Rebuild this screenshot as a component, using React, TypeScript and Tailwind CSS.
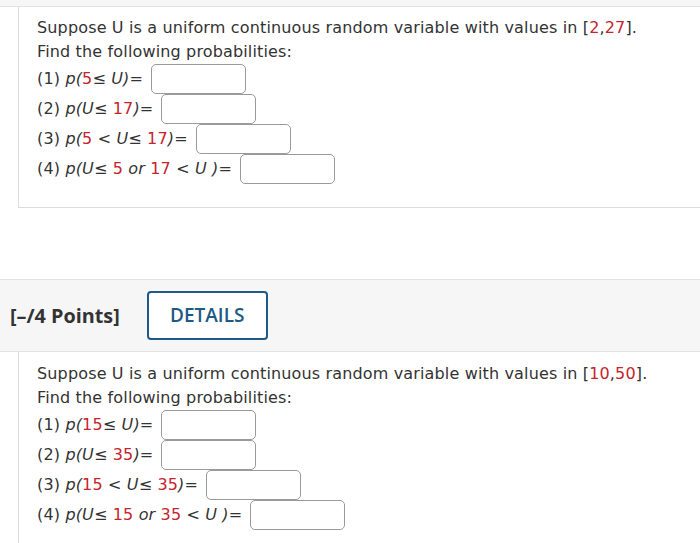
import React from "react";

const RED = "text-[#c5242c]";

function Box() {
  return (
    <span className="inline-block w-[95px] h-[30px] rounded-[5px] border-[1.5px] border-[#9a9a9a] bg-white align-middle" />
  );
}

function Num({ children }: { children: React.ReactNode }) {
  return <span className={`${RED} not-italic`}>{children}</span>;
}

function Row({ label, children }: { label: string; children: React.ReactNode }) {
  return (
    <div className="flex items-center h-[30px]">
      <span>{label}&nbsp;</span>
      <span className="italic">{children}</span>
      <span className="ml-[8px]">
        <Box />
      </span>
    </div>
  );
}

function Question({ a, b, lo, hi }: { a: string; b: string; lo: string; hi: string }) {
  return (
    <div className="text-[16px] leading-[24px] tracking-[0.15px] text-[#333]">
      <p>
        Suppose U is a uniform continuous random variable with values in [<Num>{lo}</Num>,<Num>{hi}</Num>].
      </p>
      <p>Find the following probabilities:</p>
      <Row label="(1)">
        p(<Num>{a}</Num>≤ U)<span className="not-italic">=</span>
      </Row>
      <Row label="(2)">
        p(U≤ <Num>{b}</Num>)<span className="not-italic">=</span>
      </Row>
      <Row label="(3)">
        p(<Num>{a}</Num> &lt; U≤ <Num>{b}</Num>)<span className="not-italic">=</span>
      </Row>
      <Row label="(4)">
        p(U≤ <Num>{a}</Num> or <Num>{b}</Num> &lt; U )<span className="not-italic">=</span>
      </Row>
    </div>
  );
}

export default function App() {
  return (
    <div className="w-[700px] h-[543px] overflow-hidden bg-white" style={{ fontFamily: "Verdana, 'DejaVu Sans', sans-serif" }}>
      {/* tail of previous block */}
      <div className="h-[7px] bg-[#f6f6f6] border-b border-[#e2e2e2]" />

      {/* first question */}
      <div className="ml-[18px] border-l border-b border-[#dcdcdc] pl-[18px] pt-[9px] pb-[23px]">
        <Question a="5" b="17" lo="2" hi="27" />
      </div>

      <div className="h-[71px]" />

      {/* points header */}
      <div
        className="h-[73px] bg-[#f6f6f6] border-t border-b border-[#e2e2e2] flex items-center pl-[10px] gap-[27px]"
        style={{ fontFamily: "'Open Sans', sans-serif" }}
      >
        <span className="text-[19.8px] font-bold text-[#333]">[–/4 Points]</span>
        <button className="w-[121px] h-[49px] rounded-[4px] border-2 border-[#1d5a85] bg-white text-[19px] font-semibold text-[#1d5a85]">
          DETAILS
        </button>
      </div>

      {/* second question */}
      <div className="ml-[18px] border-l border-[#dcdcdc] pl-[18px] pt-[10px] pb-[24px]">
        <Question a="15" b="35" lo="10" hi="50" />
      </div>
    </div>
  );
}
